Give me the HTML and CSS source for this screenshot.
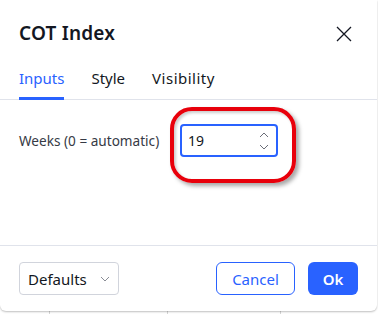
FILE: index.html
```html
<!DOCTYPE html>
<html lang="en">
<head>
    <meta charset="UTF-8">
    <title>COT Index</title>
    <link rel="stylesheet" href="styles.css">
</head>
<body>
    <div class="dialog">
        <div class="header">
            <h2>COT Index</h2>
            <svg class="close" width="16" height="16" viewBox="0 0 16 16">
                <path d="M1 1 L15 15 M15 1 L1 15" stroke="#131722" stroke-width="1.3" fill="none"/>
            </svg>
        </div>
        <div class="tabs">
            <div class="tab active">Inputs</div>
            <div class="tab">Style</div>
            <div class="tab">Visibility</div>
        </div>
        <div class="content">
            <div class="row">
                <label for="weeks">Weeks (0 = automatic)</label>
                <div class="field-wrap">
                    <div class="number-input">
                        <span class="value">19</span>
                        <svg class="spin" width="12" height="22" viewBox="0 0 12 22">
                            <path d="M2 7 L6 3 L10 7" stroke="#6a6d78" stroke-width="1" fill="none"/>
                            <path d="M2 15 L6 19 L10 15" stroke="#6a6d78" stroke-width="1" fill="none"/>
                        </svg>
                    </div>
                    <div class="highlight"></div>
                </div>
            </div>
        </div>
        <div class="footer">
            <div class="select">
                <span>Defaults</span>
                <svg width="10" height="6" viewBox="0 0 10 6">
                    <path d="M1 1 L5 5 L9 1" stroke="#8a8d96" stroke-width="1" fill="none"/>
                </svg>
            </div>
            <div class="actions">
                <button class="btn btn-outline">Cancel</button>
                <button class="btn btn-primary">Ok</button>
            </div>
        </div>
    </div>
    <div class="chart-ticks">
        <span style="left: 49px"></span>
        <span style="left: 167px"></span>
        <span style="left: 280px"></span>
    </div>
</body>
</html>
```

FILE: styles.css
```css
body {
    margin: 0;
    background-color: #ffffff;
    font-family: 'Noto Sans', sans-serif;
    color: #131722;
    width: 378px;
    height: 314px;
    overflow: hidden;
    position: relative;
}
.dialog {
    width: 377px;
    height: 311px;
    background-color: #ffffff;
    border-radius: 0 0 6px 6px;
    box-shadow: 0 1px 2px rgba(0, 0, 0, 0.25);
    display: flex;
    flex-direction: column;
    position: relative;
    z-index: 1;
}
.header {
    display: flex;
    justify-content: space-between;
    align-items: center;
    padding: 20px 25px 0 19px;
    height: 26px;
}
h2 {
    margin: 0;
    font-size: 19px;
    font-weight: 600;
    letter-spacing: 0.2px;
}
.close {
    margin-top: 2px;
}
.tabs {
    display: flex;
    gap: 27px;
    padding: 0 19px;
    margin-top: 18px;
    border-bottom: 1px solid #e0e3eb;
}
.tab {
    font-size: 15px;
    padding: 4px 0 9px;
    border-bottom: 3px solid transparent;
    margin-bottom: -1px;
}
.tab:last-child {
    letter-spacing: 0.5px;
}
.tab.active {
    color: #2962ff;
    border-bottom-color: #2962ff;
}
.content {
    flex: 1;
    padding: 24px 19px 0;
    border-bottom: 1px solid #e0e3eb;
}
.row {
    display: flex;
    align-items: center;
}
label {
    width: 161px;
    font-size: 13.6px;
    color: #363a45;
}
.field-wrap {
    position: relative;
}
.number-input {
    width: 82px;
    height: 29px;
    border: 2px solid #2962ff;
    border-radius: 4px;
    display: flex;
    align-items: center;
    justify-content: space-between;
    padding: 0 6px 0 6px;
}
.value {
    font-size: 14px;
}
.highlight {
    position: absolute;
    left: -10px;
    top: -17px;
    width: 118px;
    height: 68px;
    border: 4px solid #e8000b;
    border-radius: 22px;
    box-shadow: 3px 3px 4px rgba(0, 0, 0, 0.35), inset 2px 2px 3px rgba(0, 0, 0, 0.2);
}
.footer {
    display: flex;
    justify-content: space-between;
    align-items: center;
    padding: 16px 19px 16px;
}
.select {
    width: 82px;
    height: 31px;
    border: 1px solid #d1d4dc;
    border-radius: 4px;
    display: flex;
    align-items: center;
    justify-content: space-between;
    padding: 0 8px 0 8px;
    font-size: 15px;
}
.actions {
    display: flex;
    gap: 13px;
}
.btn {
    font-family: 'Noto Sans', sans-serif;
    font-size: 15px;
    height: 33px;
    border-radius: 6px;
    cursor: pointer;
}
.btn-outline {
    width: 79px;
    background-color: #ffffff;
    border: 1px solid #2962ff;
    color: #2962ff;
}
.btn-primary {
    width: 50px;
    background-color: #2962ff;
    border: none;
    color: #ffffff;
    font-weight: 600;
}
.chart-ticks span {
    position: absolute;
    top: 311px;
    width: 1px;
    height: 3px;
    background-color: #d6d6d6;
}
```
